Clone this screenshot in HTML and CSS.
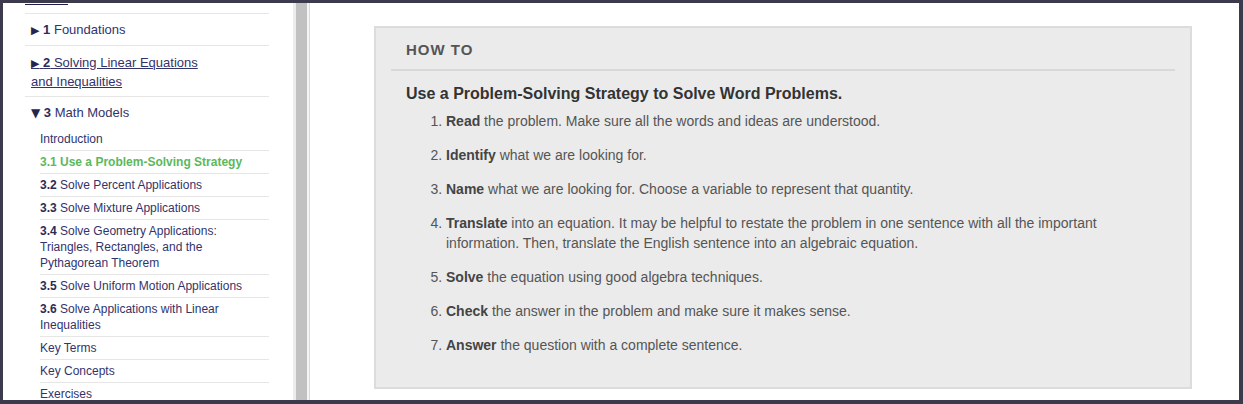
FILE: index.html
```html
<!DOCTYPE html>
<html lang="en">
<head>
<meta charset="utf-8">
<title>How To - Problem Solving Strategy</title>
<link rel="stylesheet" href="styles.css">
</head>
<body>
<div class="frame">
  <nav class="sidebar">
    <div class="cut-link"></div>
    <ul class="toc">
      <li class="chapter"><a href="#"><span class="tri">&#9654;</span> <b>1</b> Foundations</a></li>
      <li class="chapter"><a href="#" class="hover"><span class="tri">&#9654;</span> <b>2</b> Solving Linear Equations and Inequalities</a></li>
      <li class="chapter open"><a href="#"><span class="tri down">&#9660;</span> <b>3</b> Math Models</a>
        <ul class="sections">
          <li><a href="#">Introduction</a></li>
          <li class="active"><a href="#"><b>3.1</b> Use a Problem-Solving Strategy</a></li>
          <li><a href="#"><b>3.2</b> Solve Percent Applications</a></li>
          <li><a href="#"><b>3.3</b> Solve Mixture Applications</a></li>
          <li><a href="#"><b>3.4</b> Solve Geometry Applications: Triangles, Rectangles, and the Pythagorean Theorem</a></li>
          <li><a href="#"><b>3.5</b> Solve Uniform Motion Applications</a></li>
          <li><a href="#"><b>3.6</b> Solve Applications with Linear Inequalities</a></li>
          <li><a href="#">Key Terms</a></li>
          <li><a href="#">Key Concepts</a></li>
          <li><a href="#">Exercises</a></li>
        </ul>
      </li>
    </ul>
  </nav>
  <div class="gutter"></div>
  <main class="main">
    <section class="howto">
      <header class="howto-header">HOW TO</header>
      <div class="howto-body">
        <h3 class="howto-title">Use a Problem-Solving Strategy to Solve Word Problems.</h3>
        <ol class="steps">
          <li><strong>Read</strong> the problem. Make sure all the words and ideas are understood.</li>
          <li><strong>Identify</strong> what we are looking for.</li>
          <li><strong>Name</strong> what we are looking for. Choose a variable to represent that quantity.</li>
          <li><strong>Translate</strong> into an equation. It may be helpful to restate the problem in one sentence with all the important information. Then, translate the English sentence into an algebraic equation.</li>
          <li><strong>Solve</strong> the equation using good algebra techniques.</li>
          <li><strong>Check</strong> the answer in the problem and make sure it makes sense.</li>
          <li><strong>Answer</strong> the question with a complete sentence.</li>
        </ol>
      </div>
    </section>
  </main>
</div>
</body>
</html>
```
FILE: styles.css
```css
* { box-sizing: border-box; }
html, body { margin: 0; padding: 0; }
body {
  background: #3c3b4d;
  font-family: "Liberation Sans", Arial, sans-serif;
  overflow: hidden;
}
.frame {
  display: flex;
  margin: 3px 4px 0 3px;
  height: 397px;
  background: #fff;
  overflow: hidden;
}
.sidebar {
  width: 290px;
  flex: none;
  padding: 1px 24px 0 22px;
  background: #fff;
}
.cut-link {
  width: 43px;
  height: 1px;
  background: #1e1e48;
  margin-bottom: 8px;
}
.toc, .sections { list-style: none; margin: 0; padding: 0; }
.toc { border-top: 1px solid #e6e6e6; }
.chapter { border-bottom: 1px solid #e6e6e6; }
.chapter.open { border-bottom: none; }
.chapter > a {
  display: block;
  padding: 6px 70px 6px 6px;
  font-size: 13px;
  line-height: 19px;
  color: #33336b;
  text-decoration: none;
}
.chapter > a.hover { padding-top: 7px; padding-bottom: 5px; }
.chapter > a b { color: #2c2c55; }
.chapter > a.hover { text-decoration: underline; }
.tri {
  font-family: "DejaVu Sans", sans-serif;
  font-size: 11px;
  line-height: 0;
  color: #25254f;
  vertical-align: 0;
}
.tri.down { font-size: 12px; }
.sections { margin: 0 0 0 15px; }
.sections li { border-bottom: 1px solid #e6e6e6; }
.sections a {
  display: block;
  padding: 3px 0 3px 0;
  font-size: 12px;
  line-height: 16px;
  color: #33336b;
  text-decoration: none;
}
.sections a b { color: #2c2c55; }
.sections li.active a, .sections li.active a b { color: #5cb85c; font-weight: bold; }

.gutter {
  width: 17px;
  flex: none;
  background: linear-gradient(to right, #ececec 0, #ececec 3px, #c1c1c1 3px, #c1c1c1 14px, #f4f4f4 14px, #f4f4f4 16px, #dcdcdc 16px, #dcdcdc 17px);
}
.main {
  flex: 1;
  padding: 23px 0 0 64px;
  background: #fff;
}
.howto {
  width: 818px;
  border: 2px solid #dcdcdc;
  background: #ebebeb;
  padding: 0 15px 17px;
}
.howto-header {
  padding: 12px 15px 9px;
  border-bottom: 2px solid #d8d8d8;
  font-size: 15px;
  line-height: 20px;
  font-weight: bold;
  letter-spacing: 1px;
  color: #555;
}
.howto-body { padding: 12px 15px 0; }
.howto-title {
  margin: 0;
  font-size: 16px;
  line-height: 22px;
  font-weight: bold;
  color: #333;
}
.steps {
  margin: 7px 0 0;
  padding: 0 0 0 40px;
  font-size: 14px;
  line-height: 19.5px;
  color: #555;
}
.steps li { margin-bottom: 14.5px; }
.steps strong { color: #444; }
```
